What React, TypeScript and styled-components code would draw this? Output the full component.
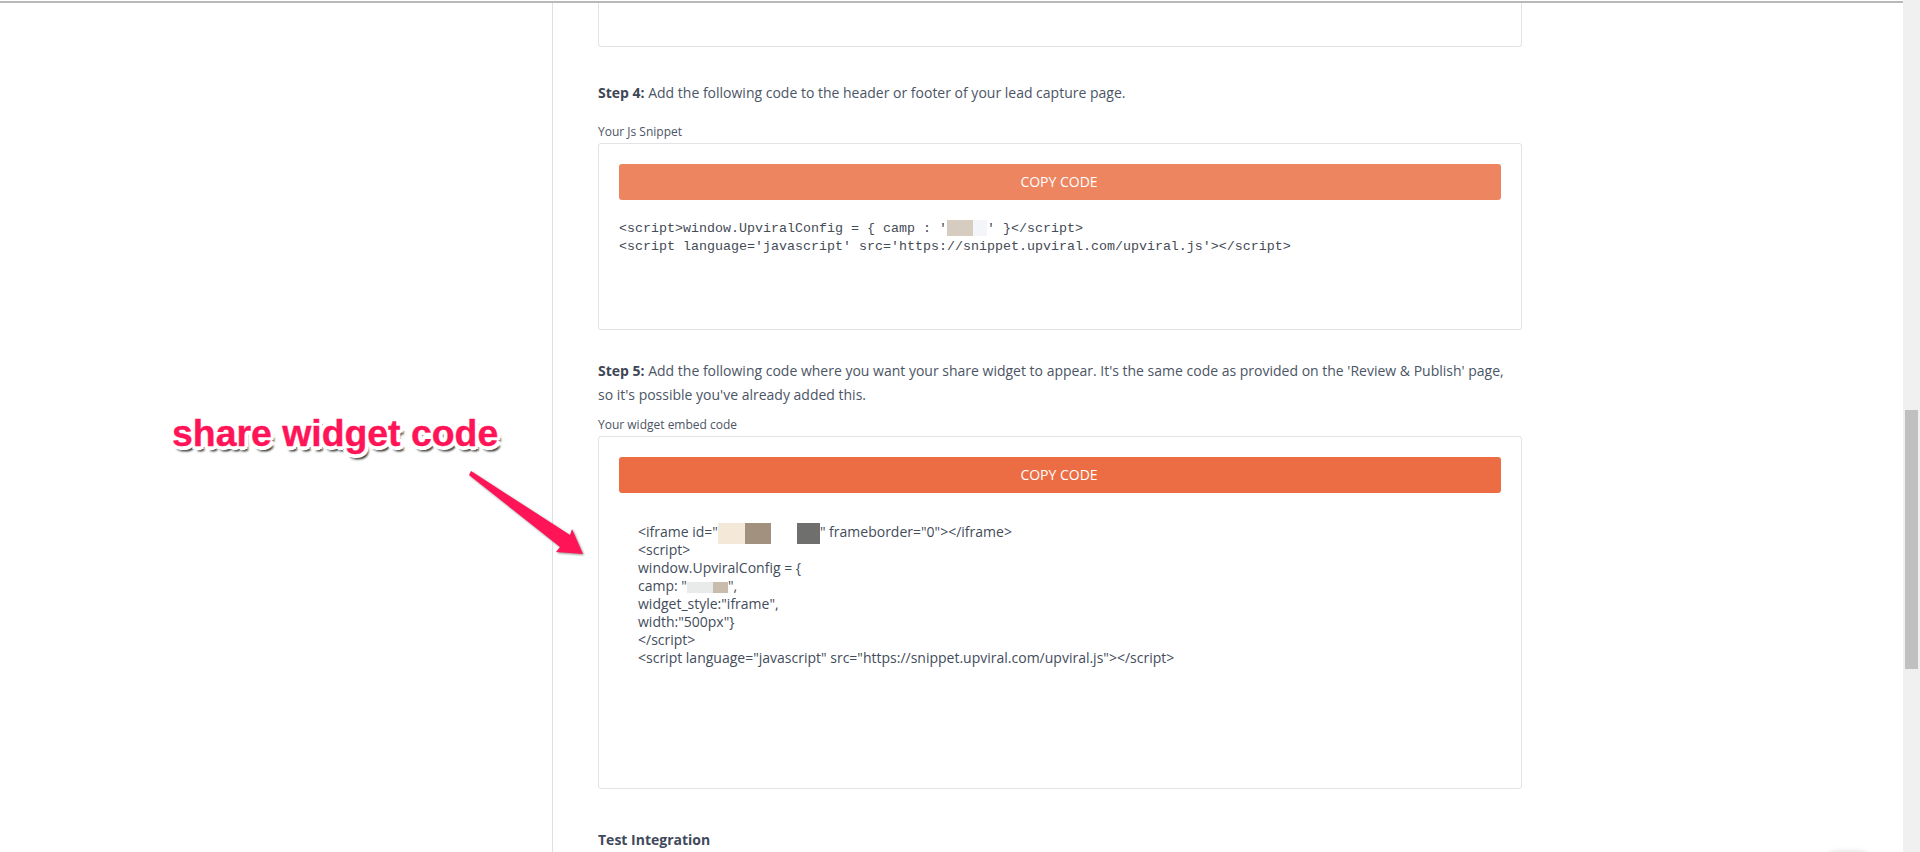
import React from "react";
import styled, { createGlobalStyle } from "styled-components";

const Global = createGlobalStyle`
  html, body { margin: 0; padding: 0; background: #fff; overflow: hidden; }
  * { box-sizing: border-box; }
`;

const Page = styled.div`
  position: relative;
  width: 1920px;
  height: 852px;
  overflow: hidden;
  display: flex;
  flex-direction: column;
  background: #fff;
  font-family: "Open Sans", "Liberation Sans", sans-serif;
  color: #4b5565;
`;

const TopRule = styled.div`
  flex: none;
  height: 2px;
  margin-top: 1px;
  background: #b9b9b9;
`;

const Body = styled.div`
  flex: 1;
  min-height: 0;
  display: flex;
`;

const Sidebar = styled.aside`
  flex: none;
  width: 553px;
  border-right: 1px solid #dfe0e3;
`;

const Main = styled.main`
  flex: 1;
  min-width: 0;
  padding-left: 45px;
`;

const Column = styled.div`
  width: 924px;
`;

const Card = styled.section<{ $height: number }>`
  height: ${(p) => p.$height}px;
  padding: 20px 20px 0;
  background: #fff;
  border: 1px solid #e2e3e6;
  border-radius: 3px;
`;

const CutCard = styled(Card)`
  border-top: none;
  border-radius: 0 0 3px 3px;
`;

const Paragraph = styled.p<{ $top: number }>`
  margin: ${(p) => p.$top}px 0 0;
  font-size: 14px;
  line-height: 24px;
  color: #4b5565;
  strong { font-weight: 700; color: #3f4656; }
`;

const Label = styled.div<{ $top: number }>`
  margin: ${(p) => p.$top}px 0 2px;
  font-size: 12px;
  line-height: 18px;
  color: #4b5565;
`;

const CopyButton = styled.button<{ $faded?: boolean }>`
  display: block;
  width: 100%;
  height: 36px;
  padding: 0 2px 2px 0;
  border: none;
  border-radius: 3px;
  background: ${(p) => (p.$faded ? "#ee8561" : "#ec6d43")};
  color: #fff;
  font-family: inherit;
  font-size: 14px;
  text-transform: uppercase;
`;

const MonoCode = styled.pre`
  margin: 20px 0 0;
  font-family: "Liberation Mono", "Courier New", monospace;
  font-size: 13.33px;
  line-height: 18px;
  color: #454b55;
`;

const EmbedCode = styled.div`
  margin: 30px 0 0 19px;
  font-size: 14px;
  line-height: 18px;
  color: #434c5b;
  white-space: pre;
`;

const Redact = styled.span<{ $w: number; $h: number; $color: string }>`
  display: inline-block;
  width: ${(p) => p.$w}px;
  height: ${(p) => p.$h}px;
  margin: -6px 0;
  background: ${(p) => p.$color};
  vertical-align: middle;
`;

const Heading = styled.h3`
  margin: 39px 0 0;
  font-size: 14px;
  line-height: 24px;
  font-weight: 700;
  color: #3f4a5c;
`;

const Scrollbar = styled.div`
  flex: none;
  width: 17px;
  margin-top: -3px;
  padding: 410px 2px 0;
  background: #f0f0f0;
`;

const Thumb = styled.div`
  height: 259px;
  background: #c0c0c0;
`;

const Callout = styled.div`
  position: absolute;
  left: 172px;
  top: 411px;
  font-family: "Liberation Sans", Arial, sans-serif;
  font-size: 37.4px;
  line-height: 44px;
  font-weight: 700;
  color: #ff1458;
  white-space: nowrap;
  -webkit-text-stroke: 0.4px #ff1458;
  text-shadow:
    3px 0 0 #fff, -3px 0 0 #fff, 0 3px 0 #fff, 0 -3px 0 #fff,
    3px 3px 0 #fff, -3px 3px 0 #fff, 3px -3px 0 #fff, -3px -3px 0 #fff,
    4px 1px 0 #fff, -4px 1px 0 #fff, 1px 4px 0 #fff, -1px -4px 0 #fff,
    4px 5px 2px rgba(0, 0, 0, 0.6), 2px 6px 2px rgba(0, 0, 0, 0.35);
`;

const ArrowSvg = styled.svg`
  position: absolute;
  left: 465px;
  top: 465px;
  overflow: visible;
  filter: drop-shadow(1px 1px 1px rgba(0, 0, 0, 0.45));
`;

const FloatingPill = styled.div`
  position: absolute;
  left: 1826px;
  top: 854px;
  width: 44px;
  height: 20px;
  border-radius: 10px;
  box-shadow: 0 0 7px rgba(0, 0, 0, 0.3);
`;

export default function App() {
  return (
    <Page>
      <Global />
      <TopRule />
      <Body>
        <Sidebar />
        <Main>
          <Column>
            <CutCard $height={44} />
            <Paragraph $top={34}>
              <strong>Step 4:</strong> Add the following code to the header or footer of your lead capture page.
            </Paragraph>
            <Label $top={18}>Your Js Snippet</Label>
            <Card $height={187}>
              <CopyButton $faded>Copy Code</CopyButton>
              <MonoCode>
                {"<script>window.UpviralConfig = { camp : '"}
                <Redact $w={26} $h={16} $color="#d6ccc0" />
                <Redact $w={14} $h={16} $color="#f3f5f8" />
                {"' }</script>\n<script language='javascript' src='https://snippet.upviral.com/upviral.js'></script>"}
              </MonoCode>
            </Card>
            <Paragraph $top={29}>
              <strong>Step 5:</strong> Add the following code where you want your share widget to appear. It's the same code as provided on the 'Review &amp; Publish' page, so it's possible you've already added this.
            </Paragraph>
            <Label $top={9}>Your widget embed code</Label>
            <Card $height={353}>
              <CopyButton>Copy Code</CopyButton>
              <EmbedCode>
                {'<iframe id="'}
                <Redact $w={27} $h={21} $color="#f4e9d8" />
                <Redact $w={26} $h={21} $color="#a39180" />
                <Redact $w={26} $h={21} $color="#ffffff" />
                <Redact $w={23} $h={21} $color="#6f706e" />
                {'" frameborder="0"></iframe>\n<script>\nwindow.UpviralConfig = {\ncamp: "'}
                <Redact $w={26} $h={11} $color="#e9ebea" />
                <Redact $w={15} $h={11} $color="#c9bcac" />
                {'",\nwidget_style:"iframe",\nwidth:"500px"}\n</script>\n<script language="javascript" src="https://snippet.upviral.com/upviral.js"></script>'}
              </EmbedCode>
            </Card>
            <Heading>Test Integration</Heading>
          </Column>
        </Main>
        <Scrollbar>
          <Thumb />
        </Scrollbar>
      </Body>
      <Callout>share widget code</Callout>
      <ArrowSvg width="125" height="95" viewBox="465 465 125 95">
        <polygon points="471,471 570,535 572,529 583,554 556,552 560,547 469,475" fill="#ff1458" />
      </ArrowSvg>
      <FloatingPill />
    </Page>
  );
}
